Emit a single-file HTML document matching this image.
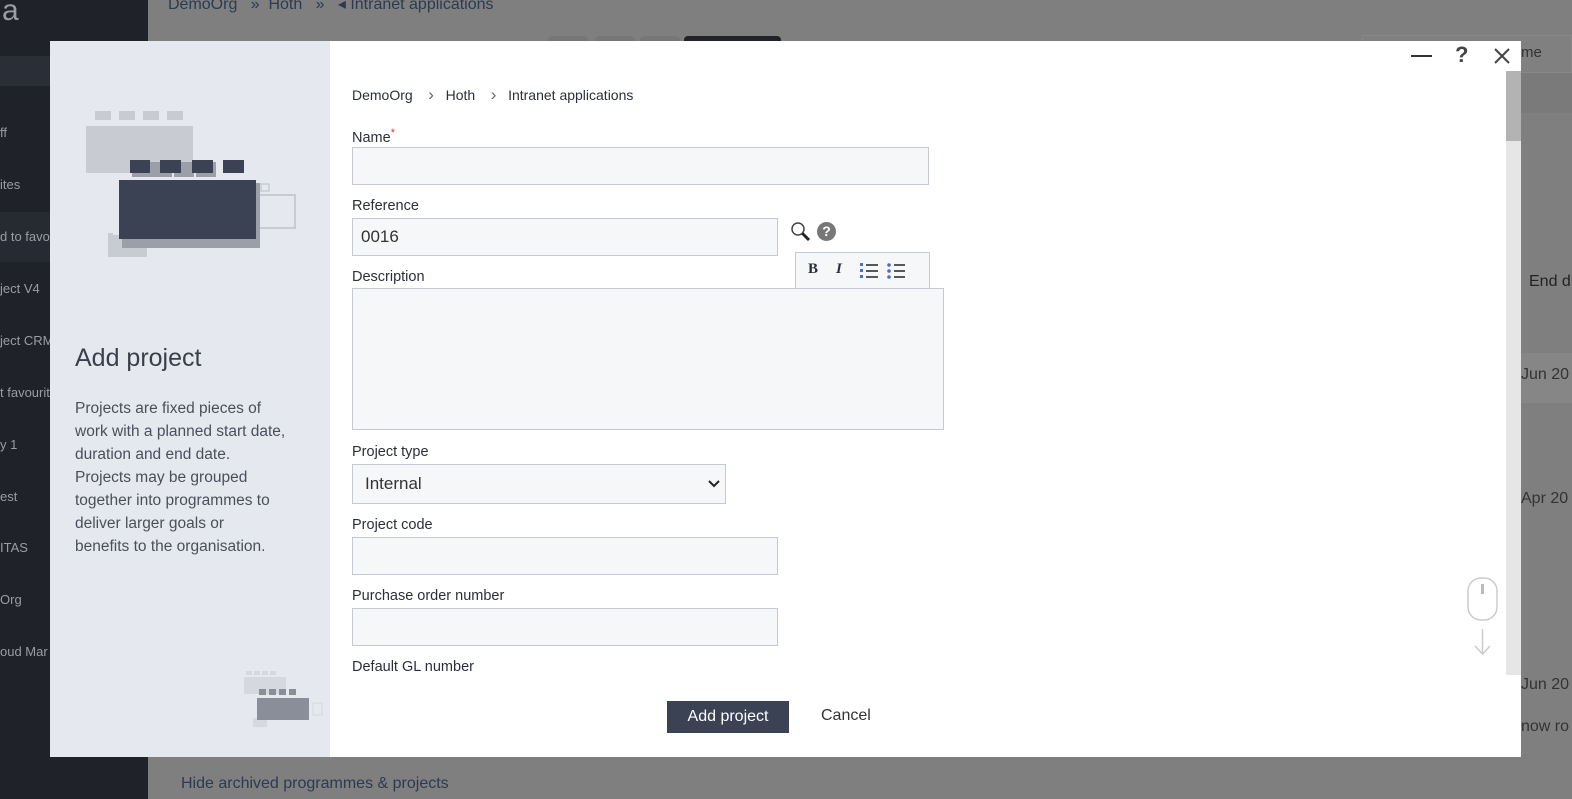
<!DOCTYPE html>
<html><head><meta charset="utf-8"><style>
*{box-sizing:border-box;margin:0;padding:0}
body{width:1572px;height:799px;overflow:hidden;position:relative;background:#7f7f7f;font-family:"Liberation Sans",sans-serif;color:#2b2f3a}
.a{position:absolute}
.sb{left:0;top:0;width:148px;height:799px;background:#1f2229}
.sbt{color:#9a9da3;font-size:13px;position:absolute;left:0}
.bg{color:#2c3a52;font-size:16px}
.modal{left:50px;top:41px;width:1471px;height:716px;background:#fff}
.lp{left:50px;top:41px;width:280px;height:716px;background:#e5e8ef}
.lbl{position:absolute;left:352px;font-size:14.5px;color:#2b2f3a}
.inp{position:absolute;left:352px;background:#f6f7f9;border:1px solid #c4c9d3}
</style></head><body>
<div class="a sb"></div>
<div class="a" style="left:0;top:56px;width:148px;height:30px;background:#2a2e37"></div>
<div class="a" style="left:0;top:212px;width:148px;height:50px;background:#262a32"></div>
<div class="a" style="left:2px;top:-6px;color:#9a9da3;font-size:30px">a</div>
<div class="sbt" style="top:125px">ff</div>
<div class="sbt" style="top:177px">ites</div>
<div class="sbt" style="top:229px">d to favo</div>
<div class="sbt" style="top:281px">ject V4</div>
<div class="sbt" style="top:333px">ject CRM</div>
<div class="sbt" style="top:385px">t favourit</div>
<div class="sbt" style="top:437px">y 1</div>
<div class="sbt" style="top:489px">est</div>
<div class="sbt" style="top:540px">ITAS</div>
<div class="sbt" style="top:592px">Org</div>
<div class="sbt" style="top:644px">oud Mar</div>
<div class="a bg" style="left:168px;top:-6px">DemoOrg &nbsp; » &nbsp;Hoth &nbsp; » &nbsp; ◂ Intranet applications</div>
<div class="a" style="left:548px;top:36px;width:40px;height:6px;background:#777;border-radius:4px 4px 0 0"></div>
<div class="a" style="left:595px;top:36px;width:40px;height:6px;background:#777;border-radius:4px 4px 0 0"></div>
<div class="a" style="left:640px;top:36px;width:40px;height:6px;background:#777;border-radius:4px 4px 0 0"></div>
<div class="a" style="left:684px;top:36px;width:97px;height:6px;background:#1f2229;border-radius:4px 4px 0 0"></div>
<div class="a" style="left:1362px;top:35px;width:210px;height:38px;border:1px solid #888;background:#808080"></div>
<div class="a" style="left:1521px;top:44px;font-size:15px;color:#333">me</div>
<div class="a" style="left:1521px;top:73px;width:51px;height:40px;background:#7a7a7a"></div>
<div class="a" style="left:1529px;top:273px;font-size:16px;color:#222">End d</div>
<div class="a" style="left:1521px;top:353px;width:51px;height:50px;background:#868686"></div>
<div class="a" style="left:1521px;top:366px;font-size:16px;color:#333">Jun 20</div>
<div class="a" style="left:1521px;top:490px;font-size:16px;color:#333">Apr 20</div>
<div class="a" style="left:1521px;top:676px;font-size:16px;color:#333">Jun 20</div>
<div class="a" style="left:1521px;top:718px;font-size:16px;color:#333">now ro</div>
<div class="a bg" style="left:181px;top:775px">Hide archived programmes &amp; projects</div>

<div class="a modal"></div>
<div class="a lp"></div>
<svg class="a" style="left:80px;top:105px" width="220" height="155">
<g fill="#c8cbd2"><rect x="15" y="6" width="16" height="9"/><rect x="39" y="6" width="16" height="9"/><rect x="63" y="6" width="16" height="9"/><rect x="87" y="6" width="16" height="9"/>
<rect x="6" y="21" width="107" height="47"/><rect x="28" y="130" width="39" height="22"/><rect x="28" y="128" width="5" height="4"/></g>
<rect x="168" y="79" width="8" height="7" fill="none" stroke="#c8cbd2" stroke-width="1.5"/><rect x="181" y="79" width="8" height="7" fill="none" stroke="#c8cbd2" stroke-width="1.5"/>
<rect x="160" y="90" width="55" height="33" fill="none" stroke="#c8cbd2" stroke-width="2"/>
<g fill="#9b9fa8"><rect x="52" y="57" width="20" height="15"/><rect x="72" y="57" width="20" height="15"/><rect x="94" y="57" width="20" height="15"/><rect x="116" y="57" width="20" height="15"/><rect x="42" y="78" width="138" height="65"/></g>
<g fill="#3a4254"><rect x="50" y="55" width="20" height="13"/><rect x="80" y="55" width="21" height="13"/><rect x="112" y="55" width="21" height="13"/><rect x="143" y="55" width="21" height="13"/><rect x="39" y="75" width="137" height="59"/></g>
</svg>
<svg class="a" style="left:243px;top:670px" width="85" height="60">
<g fill="#d5d8de"><rect x="3" y="1" width="6" height="4"/><rect x="11" y="1" width="6" height="4"/><rect x="19" y="1" width="6" height="4"/><rect x="27" y="1" width="6" height="4"/><rect x="1" y="7" width="42" height="17"/><rect x="10" y="48" width="14" height="9"/></g>
<rect x="70" y="33" width="9" height="12" fill="none" stroke="#d5d8de"/>
<g fill="#8a8e98"><rect x="16" y="19" width="7" height="6"/><rect x="26" y="19" width="7" height="6"/><rect x="36" y="19" width="7" height="6"/><rect x="46" y="19" width="7" height="6"/><rect x="14" y="28" width="52" height="22"/></g>
</svg>
<div class="a" style="left:75px;top:344px;font-size:25px;color:#3a3f4b">Add project</div>
<div class="a" style="left:75px;top:397px;font-size:15.5px;line-height:23px;color:#4a4f5b;white-space:nowrap">Projects are fixed pieces of<br>work with a planned start date,<br>duration and end date.<br>Projects may be grouped<br>together into programmes to<br>deliver larger goals or<br>benefits to the organisation.</div>

<div class="a" style="left:1411px;top:55px;width:21px;height:2px;background:#333"></div>
<div class="a" style="left:1455px;top:42px;font-size:22px;color:#444;font-weight:bold">?</div>
<svg class="a" style="left:1493px;top:47px" width="18" height="18"><path d="M2 2L16 16M16 2L2 16" stroke="#444" stroke-width="2"/></svg>
<div class="a" style="left:1506px;top:71px;width:15px;height:604px;background:#e6e6e6"></div>
<div class="a" style="left:1506px;top:71px;width:15px;height:70px;background:#b3b3b3"></div>
<svg class="a" style="left:1466px;top:576px" width="34" height="82"><rect x="2" y="2" width="29" height="42" rx="13" fill="none" stroke="#ccc" stroke-width="1.5"/><rect x="15" y="8" width="3" height="10" fill="#bbb"/><path d="M16.5 53V78M9 70L16.5 78L24 70" fill="none" stroke="#ccc" stroke-width="1.5"/></svg>

<div class="a" style="left:352px;top:85px;font-size:14px;color:#2b2f3a">DemoOrg &nbsp;&nbsp; <span style="color:#666;font-size:17px">&#8250;</span> &nbsp;&nbsp;Hoth &nbsp;&nbsp; <span style="color:#666;font-size:17px">&#8250;</span> &nbsp;&nbsp;Intranet applications</div>
<div class="lbl" style="top:127px">Name<sup style="color:#d33;font-size:11px">*</sup></div>
<div class="inp" style="top:147px;width:577px;height:38px"></div>
<div class="lbl" style="top:198px">Reference</div>
<div class="inp" style="top:218px;width:426px;height:38px;padding:8px;font-size:17px;color:#333">0016</div>
<svg class="a" style="left:790px;top:221px" width="22" height="22"><circle cx="8" cy="8" r="6" fill="none" stroke="#444" stroke-width="1.5"/><path d="M12.5 12.5L19 19" stroke="#222" stroke-width="3"/></svg>
<div class="a" style="left:817px;top:222px;width:19px;height:19px;border-radius:50%;background:#777;color:#fff;font-size:14px;font-weight:bold;text-align:center;line-height:19px">?</div>
<div class="lbl" style="top:269px">Description</div>
<div class="a" style="left:795px;top:252px;width:135px;height:37px;border:1px solid #c4c9d3;background:#f6f7f9"></div>
<div class="a" style="left:808px;top:261px;font-size:15px;font-weight:bold;font-family:'Liberation Serif',serif">B</div>
<div class="a" style="left:836px;top:261px;font-size:15px;font-weight:bold;font-style:italic;font-family:'Liberation Serif',serif">I</div>
<svg class="a" style="left:859px;top:262px" width="60" height="18"><g fill="#4a6fc4"><rect x="1" y="1" width="3" height="3"/><rect x="1" y="7" width="3" height="3"/><rect x="1" y="13" width="3" height="3"/><circle cx="30" cy="3" r="1.8"/><circle cx="30" cy="9" r="1.8"/><circle cx="30" cy="15" r="1.8"/></g><g stroke="#222" stroke-width="1.5"><path d="M7 3H19M7 9H19M7 15H19M35 3H46M35 9H46M35 15H46"/></g></svg>
<div class="inp" style="top:288px;width:592px;height:142px"></div>
<div class="lbl" style="top:444px">Project type</div>
<div class="inp" style="top:464px;width:374px;height:40px;background:#f6f7f9;padding:9px 12px;font-size:17px;color:#333">Internal</div>
<svg class="a" style="left:707px;top:479px" width="14" height="10"><path d="M2 2L7 7L12 2" fill="none" stroke="#222" stroke-width="2"/></svg>
<div class="lbl" style="top:517px">Project code</div>
<div class="inp" style="top:537px;width:426px;height:38px"></div>
<div class="lbl" style="top:588px">Purchase order number</div>
<div class="inp" style="top:608px;width:426px;height:38px"></div>
<div class="lbl" style="top:659px">Default GL number</div>
<div class="a" style="left:667px;top:701px;width:122px;height:32px;background:#3a4254;color:#fff;font-size:16px;text-align:center;line-height:32px">Add project</div>
<div class="a" style="left:821px;top:707px;font-size:16px;color:#333">Cancel</div>
</body></html>
